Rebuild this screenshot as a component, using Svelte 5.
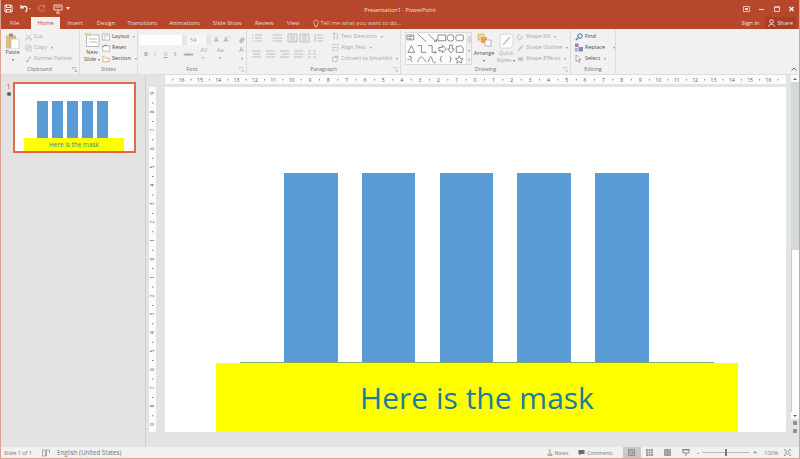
<script>
  const tabs = ['File','Home','Insert','Design','Transitions','Animations','Slide Show','Review','View'];
  const bars = [0,1,2,3,4];
  const hticks = Array.from({length: 67}, (_, i) => i - 33);
  const vticks = Array.from({length: 37}, (_, i) => i - 18);
</script>

<div class="app">
  <header class="title">
    <div class="qat">
      <svg width="9" height="9" viewBox="0 0 9 9"><path d="M1 1h6l1 1v6H1z M2.500 1v2.500h4V1 M2.500 8V5.500h4V8" fill="none" stroke="#fff" stroke-width=".9"/></svg>
      <svg class="undo" width="12" height="9" viewBox="0 0 12 9"><path d="M2 1v3h3 M2 4c2-2.500 6-2 6 1 0 1-.6 2-1.500 3" fill="none" stroke="#fff" stroke-width="1.200"/><path d="M10 4h2l-1 1.200z" fill="#f3d7cf"/></svg>
      <svg class="dim" width="9" height="9" viewBox="0 0 9 9"><path d="M7 2.500A3 3 0 1 0 7.500 5 M7.500 .8v2h-2" fill="none" stroke="#d98d78" stroke-width=".9"/></svg>
      <svg class="slideq" width="10" height="10" viewBox="0 0 10 10"><path d="M1 1h8v5H1z M5 6v3 M3 9h4" fill="none" stroke="#f3d7cf"/><path d="M2.500 3h5" stroke="#f3d7cf"/></svg>
      <svg width="4" height="3" viewBox="0 0 4 3"><path d="M0 0h4L2 3z" fill="#f3d7cf"/></svg>
    </div>
    <div class="doc">Presentation1 - PowerPoint</div>
    <div class="win">
      <svg width="7" height="6" viewBox="0 0 7 6"><path d="M.5.500h6v5h-6z" fill="none" stroke="#f3d7cf" stroke-width=".8"/><path d="M2 2h3v2H2z" fill="#f3d7cf"/></svg>
      <svg width="5" height="6" viewBox="0 0 5 6"><path d="M0 3.500h5" stroke="#f3d7cf" stroke-width="1.100"/></svg>
      <svg width="6" height="6" viewBox="0 0 6 6"><path d="M.5 1h5v4.500h-5z" fill="none" stroke="#f3d7cf" stroke-width=".9"/><path d="M.5 1h5" stroke="#f3d7cf" stroke-width="1.300"/></svg>
      <svg width="5" height="6" viewBox="0 0 5 6"><path d="M.5 1l4 4M4.500 1l-4 4" stroke="#fff" stroke-width="1.200"/></svg>
    </div>
  </header>

  <nav class="tabs">
    {#each tabs as t, i}
      <span class="tab" class:active={i === 1}>{t}</span>
    {/each}
    <span class="tell">
      <svg width="6" height="9" viewBox="0 0 6 9"><path d="M1.500 5.500C.2 4 .5 1 3 1s2.800 3 1.500 4.500V7h-3zM2 8h2" fill="none" stroke="#f0cfc5" stroke-width=".7"/></svg>
      Tell me what you want to do...
    </span>
    <span class="account">
      <span>Sign in</span>
      <span class="share">
        <svg width="7" height="8" viewBox="0 0 7 8"><circle cx="3.500" cy="2.500" r="1.800" fill="none" stroke="#fff" stroke-width=".8"/><path d="M.5 7.500c.3-3 5.700-3 6 0" fill="none" stroke="#fff" stroke-width=".8"/></svg>
        Share
      </span>
    </span>
  </nav>

  <section class="ribbon">
    <div class="group clipboard">
      <div class="body">
        <div class="big paste">
          <svg width="15" height="16" viewBox="0 0 15 16"><path d="M1 2.500h10v13H1z" fill="#dcbc80"/><path d="M4 .5h4v3H4z" fill="#8d8d8d"/><path d="M6 6h8v10H6z" fill="#fff" stroke="#b5b5b5" stroke-width=".6"/></svg>
          <span>Paste</span>
          <i class="caret"></i>
        </div>
        <div class="rows muted">
          <span class="row"><svg width="7" height="8" viewBox="0 0 8 8"><path d="M1 1l5 5M7 1L2 6" stroke="#b9b9b9"/><circle cx="1.500" cy="6.500" r="1.200" fill="none" stroke="#b9b9b9" stroke-width=".6"/><circle cx="6.500" cy="6.500" r="1.200" fill="none" stroke="#b9b9b9" stroke-width=".6"/></svg>Cut</span>
          <span class="row"><svg width="7" height="8" viewBox="0 0 8 8"><path d="M.5.500h5v5h-5zM2.500 2.500h5v5h-5z" fill="#f1f1f1" stroke="#bbb" stroke-width=".7"/></svg>Copy<i class="caret small"></i></span>
          <span class="row"><svg width="7" height="8" viewBox="0 0 8 8"><path d="M1 7l3-3 1 1-3 3zM4 3l2-2 1 1-2 2z" fill="#b5b5b5"/></svg>Format Painter</span>
        </div>
      </div>
      <div class="label">Clipboard<svg class="launcher" width="5" height="5" viewBox="0 0 5 5"><path d="M.5 2V.5H4.500M2 2l2.500 2.500M4.500 2.500v2H2.500" fill="none" stroke="#999" stroke-width=".6"/></svg></div>
    </div>

    <div class="group slides">
      <div class="body">
        <div class="big newslide">
          <svg width="15" height="15" viewBox="0 0 15 15"><path d="M1.500 2h12.500v11.500H1.500z" fill="#fff" stroke="#a9a9a9" stroke-width=".8"/><path d="M0 0h6v3H0z" fill="#eccd92"/><path d="M4 6h8M4 9h8" stroke="#bdbdbd"/></svg>
          <span>New</span>
          <span>Slide<i class="caret inl"></i></span>
        </div>
        <div class="rows on">
          <span class="row"><svg width="8" height="8" viewBox="0 0 9 8"><path d="M.5.500h8v7h-8z" fill="#fff" stroke="#999" stroke-width=".7"/><path d="M2 2h5v1.500H2zM2 4.500h2v2H2z" fill="#c9c9c9"/></svg>Layout<i class="caret small"></i></span>
          <span class="row"><svg width="8" height="8" viewBox="0 0 9 8"><path d="M.5 1.500h8v6h-8z" fill="#fff" stroke="#999" stroke-width=".7"/><path d="M1 3C2 .5 5 .5 6 2" fill="none" stroke="#4b86bd"/></svg>Reset</span>
          <span class="row"><svg width="8" height="8" viewBox="0 0 9 8"><path d="M1 1h2M1 1v6h7V3H3" fill="#fff" stroke="#d19a55" stroke-width=".8"/></svg>Section<i class="caret small"></i></span>
        </div>
      </div>
      <div class="label">Slides</div>
    </div>

    <div class="group font">
      <div class="body col">
        <div class="fontrow">
          <span class="fname"><i class="spin"></i></span>
          <span class="fsize">54<i class="spin"></i></span>
          <span class="grow">A<sup>^</sup></span>
          <span class="grow">A<sup>v</sup></span>
          <svg class="eraser" width="8" height="8" viewBox="0 0 8 8"><path d="M1 5l3-4 3 2-3 4H2z" fill="#cdb9b5"/></svg>
        </div>
        <div class="fmt muted">
          <b>B</b><em>I</em><u>U</u><span>S</span><s>abc</s><span class="av">AV<i class="caret small"></i></span><span class="aa">Aa<i class="caret small"></i></span><span class="fcolor">A<i class="caret small"></i></span>
        </div>
      </div>
      <div class="label">Font<svg class="launcher" width="5" height="5" viewBox="0 0 5 5"><path d="M.5 2V.5H4.500M2 2l2.500 2.500M4.500 2.500v2H2.500" fill="none" stroke="#bbb" stroke-width=".6"/></svg></div>
    </div>

    <div class="group para">
      <div class="body">
        <svg class="paraicons" width="80" height="27" viewBox="0 0 80 27">
          <g fill="none" stroke="#b4b4b4" stroke-width=".8">
            <path d="M3 2h7M3 5h7M3 8h7M0 2h1.500M0 5h1.500M0 8h1.500"/>
            <path d="M22 2h8M22 5h8M22 8h8M20 2h1M20 5h1M20 8h1"/>
            <path d="M36 1h9v8h-9zM38 3h5M38 5h5M38 7h5"/>
            <path d="M48 1h9v8h-9zM50 3h5M50 5h5M50 7h5"/>
            <path d="M65 2h6M65 5h6M65 8h6M63 1v8"/>
            <path d="M0 18h9M1 21h7M0 24h9"/>
            <path d="M14 18h9M14 21h9M14 24h9"/>
            <path d="M28 18h9M30 21h7M28 24h9"/>
            <path d="M42 18h9M42 21h9M42 24h9"/>
            <path d="M56 18h3M56 21h3M56 24h3M61 18h3M61 21h3M61 24h3"/>
          </g>
        </svg>
        <div class="rows muted para-text">
          <span class="row"><svg width="7" height="9" viewBox="0 0 8 9"><path d="M1 1h3M2.500 1v7M6 1v7" fill="none" stroke="#b7b7b7"/></svg>Text Direction<i class="caret small"></i></span>
          <span class="row"><svg width="7" height="9" viewBox="0 0 8 9"><path d="M.5 1h7v7h-7z" fill="none" stroke="#b7b7b7" stroke-dasharray="1 .6"/><path d="M2 4.500h4" stroke="#b7b7b7"/></svg>Align Text<i class="caret small"></i></span>
          <span class="row"><svg width="7" height="9" viewBox="0 0 9 9"><path d="M.5 3h6v5.500h-6z" fill="none" stroke="#b7b7b7"/><path d="M3 1h6v2H3z" fill="#b8cfb0"/></svg>Convert to SmartArt<i class="caret small"></i></span>
        </div>
      </div>
      <div class="label">Paragraph<svg class="launcher" width="5" height="5" viewBox="0 0 5 5"><path d="M.5 2V.5H4.500M2 2l2.500 2.500M4.500 2.500v2H2.500" fill="none" stroke="#bbb" stroke-width=".6"/></svg></div>
    </div>

    <div class="group drawing">
      <div class="body">
        <div class="gallery">
          <svg width="60" height="31" viewBox="0 0 62 32">
            <g fill="none" stroke="#5c5c5c" stroke-width=".7">
              <path d="M1 2h7v5H1zM2.500 3.500h4M2.500 5.500h3"/>
              <path d="M12 1l9 8"/>
              <path d="M23 1l8 8M29 8.500h2.500V6"/>
              <path d="M33 2h8v6h-8z"/>
              <circle cx="46" cy="5" r="3.500"/>
              <rect x="51.500" y="2" width="8" height="6" rx="2"/>
              <path d="M2 20l3.500-7 3.500 7z"/>
              <path d="M12 13h4v7h5"/>
              <path d="M23 13h4v7h4M29.500 18.500l1.500 1.500-1.500 1.500"/>
              <path d="M34 15h3.500v-2.500l4 4-4 4V18.500H34z"/>
              <path d="M45 12.500h3v4h2l-3.500 4-3.500-4h2z"/>
              <path d="M52 14h3l1-1.500 3 3V20h-7z"/>
              <path d="M3 24l3 1-1.500 2 2 3M1.500 27l2 .5"/>
              <path d="M12 30c3-8 4-6 9 0M12 24"/>
              <path d="M23 30c2-7 3-7 4-3s2 4 4 3"/>
              <path d="M37 24c-2 0 0 3-2 3 2 0 0 3 2 3"/>
              <path d="M45 24c2 0 0 3 2 3-2 0 0 3-2 3"/>
              <path d="M55 23.500l1.200 2.700 2.800.3-2.100 1.900.6 2.800-2.500-1.500-2.500 1.500.6-2.800-2.100-1.900 2.800-.3z"/>
            </g>
          </svg>
          <div class="gscroll"><i class="g1"></i><i class="caret small"></i><i class="caret small"></i></div>
        </div>
        <div class="big arrange">
          <svg width="15" height="14" viewBox="0 0 15 14"><path d="M1 1h6v6H1z" fill="#f3d69a" stroke="#d8a64d" stroke-width=".7"/><path d="M4 4h6v6H4z" fill="#eba93c"/><path d="M8 7h6v6H8z" fill="#fff" stroke="#9a9a9a" stroke-width=".7"/></svg>
          <span>Arrange</span>
          <i class="caret"></i>
        </div>
        <div class="big quick muted">
          <svg width="15" height="16" viewBox="0 0 15 16"><path d="M1 2c4-1.500 9-1.500 13 0v9c0 2-2 4-4 4H1z" fill="#fcfcfc" stroke="#d0d0d0" stroke-width=".8"/><path d="M4 12l7-8" stroke="#c2c2c2" stroke-width="1.500"/></svg>
          <span>Quick</span>
          <span>Styles<i class="caret inl"></i></span>
        </div>
        <div class="rows muted shapes">
          <span class="row"><svg width="7" height="8" viewBox="0 0 8 8"><path d="M2 1l4 4-3 2.500L0 4z" fill="none" stroke="#b7b7b7"/></svg>Shape Fill<i class="caret small"></i></span>
          <span class="row"><svg width="7" height="8" viewBox="0 0 8 8"><path d="M1 7l5-6 1 1-5 5z" fill="none" stroke="#b7b7b7"/></svg>Shape Outline<i class="caret small"></i></span>
          <span class="row"><svg width="7" height="8" viewBox="0 0 8 8"><path d="M1 2h6v4H1z" fill="#c5c5c5"/></svg>Shape Effects<i class="caret small"></i></span>
        </div>
      </div>
      <div class="label">Drawing<svg class="launcher" width="5" height="5" viewBox="0 0 5 5"><path d="M.5 2V.5H4.500M2 2l2.500 2.500M4.500 2.500v2H2.500" fill="none" stroke="#bbb" stroke-width=".6"/></svg></div>
    </div>

    <div class="group editing">
      <div class="body">
        <div class="rows on">
          <span class="row"><svg width="8" height="8" viewBox="0 0 8 8"><circle cx="5" cy="3" r="2.200" fill="none" stroke="#2f6fae"/><path d="M3.300 4.700L.8 7.200" stroke="#2f6fae" stroke-width="1.200"/></svg>Find</span>
          <span class="row"><svg width="8" height="9" viewBox="0 0 9 9"><path d="M0 0h4v4H0z" fill="#9a7fb0"/><path d="M4 4h5v5H4z" fill="#6f8fb5"/><path d="M0 5h3v4H0z" fill="#b9a6c8"/></svg>Replace<i class="caret small far"></i></span>
          <span class="row"><svg width="8" height="9" viewBox="0 0 8 9"><path d="M1 1v6.500l1.700-1.500 1.300 2.500 1-.5L3.800 5.600H6z" fill="#fff" stroke="#777" stroke-width=".6"/></svg>Select<i class="caret small"></i></span>
        </div>
      </div>
      <div class="label">Editing</div>
    </div>

    <svg class="collapse" width="6" height="4" viewBox="0 0 6 4"><path d="M.5 3.500L3 1l2.500 2.500" fill="none" stroke="#666" stroke-width="1"/></svg>
  </section>

  <main class="main">
    <aside class="thumbs">
      <div class="num">
        <span>1</span>
        <i class="star"></i>
      </div>
      <div class="thumb">
        <div class="tbars">
          {#each bars as b}<i></i>{/each}
        </div>
        <div class="tmask">Here is the mask</div>
      </div>
    </aside>

    <div class="editor">
      <div class="stage">
        <svg class="hruler" width="621" height="9" viewBox="0 0 621 9">
          {#each hticks as t}
            {#if t % 2 === 0}
              <text x={310 + t * 9.17} y="6.500" text-anchor="middle">{Math.abs(t / 2)}</text>
            {:else}
              <rect x={310 + t * 9.17} y="4" width=".8" height="1.500" fill="#666" />
            {/if}
          {/each}
        </svg>
        <div class="workrow">
          <svg class="vruler" width="7" height="345" viewBox="0 0 7 345">
            {#each vticks as t}
              {#if t % 2 === 0}
                <text transform="translate(5.200 {172 + t * 9.2}) rotate(-90)" text-anchor="middle">{Math.abs(t / 2)}</text>
              {:else}
                <rect x="3" y={172 + t * 9.2} width="1.500" height=".8" fill="#666" />
              {/if}
            {/each}
          </svg>
          <div class="slide">
            <div class="bars">
              {#each bars as b}<div class="bar"></div>{/each}
            </div>
            <div class="mask">Here is the mask</div>
          </div>
        </div>
      </div>
      <div class="scroll">
        <span class="arrow up"></span>
        <span class="track"></span>
        <span class="sthumb"></span>
        <span class="arrow down"></span>
        <span class="pg"></span>
        <span class="pg"></span>
      </div>
    </div>
  </main>

  <footer class="status">
    <span class="s1">Slide 1 of 1</span>
    <svg class="spell" width="8" height="8" viewBox="0 0 8 8"><path d="M.5 1h3v6h-3zM4.500 1h3v3M4.500 1v6" fill="none" stroke="#888" stroke-width=".7"/></svg>
    <span class="s2">English (United States)</span>
    <span class="right">
      <span class="si"><svg width="6" height="7" viewBox="0 0 6 7"><path d="M1 5h4v1.500H1zM3 .5v4.500M1.500 2L3 .5" fill="none" stroke="#888" stroke-width=".7"/></svg>Notes</span>
      <span class="si cm"><svg width="7" height="7" viewBox="0 0 7 7"><path d="M.5 1h6v4H3L1.500 6.500V5h-1z" fill="#6a6a6a"/></svg>Comments</span>
      <span class="views">
        <span class="v on"><svg width="7" height="7" viewBox="0 0 7 7"><path d="M.5.500h6v6h-6zM2 2h3v3H2z" fill="none" stroke="#777" stroke-width=".7"/></svg></span>
        <span class="v"><svg width="7" height="7" viewBox="0 0 7 7"><path d="M0 0h2v2H0zM2.500 0h2v2h-2zM5 0h2v2H5zM0 2.500h2v2H0zM2.500 2.500h2v2h-2zM5 2.500h2v2H5zM0 5h2v2H0zM2.500 5h2v2h-2zM5 5h2v2H5z" fill="#999"/></svg></span>
        <span class="v"><svg width="7" height="7" viewBox="0 0 7 7"><path d="M.5.500h6v6h-6zM3.500.5v6" fill="#aaa" stroke="#888" stroke-width=".7"/></svg></span>
        <span class="v"><svg width="8" height="7" viewBox="0 0 8 7"><path d="M0 .5h8M1 1h6v3H1zM4 4v3" fill="none" stroke="#777" stroke-width=".8"/></svg></span>
      </span>
      <span class="zoom">
        <b>-</b>
        <span class="slider"><i></i></span>
        <b>+</b>
      </span>
      <span class="pct">100%</span>
      <svg class="fit" width="7" height="7" viewBox="0 0 7 7"><path d="M.5 2V.5H2M5 .5h1.500V2M6.500 5v1.500H5M2 6.500H.5V5M2 2h3v3H2z" fill="none" stroke="#888" stroke-width=".7"/></svg>
    </span>
  </footer>
</div>

<style>
  :global(body) { margin: 0; background: #e3e3e3; }
  .app {
    width: 800px; height: 459px; display: flex; flex-direction: column; overflow: hidden;
    font-family: "Open Sans", "Liberation Sans", sans-serif; font-size: 5.500px; color: #555;
    box-sizing: border-box; border: solid #d9a391; border-width: 0 1px 1px 1px;
    position: relative;
  }
  svg { display: block; flex: none; }

  .title { height: 17px; flex: none; margin: 0 -1px; background: #b7472a; display: flex; align-items: center; color: #f4dfd9; position: relative; }
  .qat { display: flex; align-items: center; margin-left: 4px; gap: 5px; }
  .qat .undo { margin-left: 1px; }
  .qat .dim { margin-left: 1px; }
  .qat .slideq { margin-left: 2px; }
  .qat svg:last-child { margin-left: -2px; }
  .doc { position: absolute; left: 0; right: 0; text-align: center; top: 6px; font-size: 5.600px; color: #f6e0da; }
  .win { margin-left: auto; display: flex; gap: 9.500px; align-items: center; margin-right: 6px; }

  .tabs { height: 12px; flex: none; margin: 0 -1px; background: #b7472a; display: flex; align-items: stretch; color: #f4dcd5; font-size: 5.800px; line-height: 13px; position: relative; }
  .tab { margin-left: 13px; white-space: nowrap; }
  .tab:first-child { margin-left: 10px; }
  .tab.active { background: #f1f1f1; color: #b7472a; margin-left: 12px; width: 29px; text-align: center; }
  .tab:nth-child(3) { margin-left: 7px; }
  .tab:nth-child(4) { margin-left: 14px; }
  .tab:nth-child(5) { margin-left: 12px; }
  .tab:nth-child(6) { margin-left: 12px; }
  .tell { margin-left: 13px; display: flex; align-items: center; gap: 2px; color: #efc9bd; }
  .account { margin-left: auto; display: flex; align-items: stretch; gap: 6px; margin-right: 4px; color: #f7e4de; }
  .share { display: flex; align-items: center; gap: 2px; background: #a83f24; padding: 0 3px; }

  .ribbon { height: 46px; flex: none; margin: 0 -1px; background: #f1f1f1; display: flex; position: relative; padding-top: 1px; box-sizing: border-box; border-bottom: 1px solid #dedede; }
  .group { flex: none; display: flex; flex-direction: column; border-right: 1px solid #dcdcdc; box-sizing: border-box; height: 44px; position: relative; }
  .body { height: 35px; flex: none; display: flex; }
  .body.col { flex-direction: column; }
  .label { height: 9px; line-height: 9px; text-align: center; color: #777; font-size: 5.500px; }
  .launcher { position: absolute; right: 2px; bottom: 2px; }
  .clipboard { width: 80px; }
  .slides { width: 58px; }
  .font { width: 109px; }
  .para { width: 154px; }
  .drawing { width: 170px; }
  .editing { width: 45px; }

  .big { display: flex; flex-direction: column; align-items: center; line-height: 7px; flex: none; }
  .caret { display: inline-block; width: 0; height: 0; border: 1.500px solid transparent; border-top: 2px solid #666; border-bottom: 0; }
  .caret.small { margin-left: 2px; vertical-align: middle; border-top-color: #999; }
  .caret.inl { margin-left: 2px; vertical-align: middle; }
  .caret.far { margin-left: 6px; }
  .paste { width: 25px; margin-top: 3px; color: #555; }
  .paste .caret { margin-top: 3px; }
  .rows { display: flex; flex-direction: column; line-height: 11px; white-space: nowrap; margin-top: 1px; }
  .row { display: flex; align-items: center; height: 11px; gap: 2px; }
  .muted { color: #a6a6a6; }
  .on { color: #4b4b4b; }
  .newslide { width: 20px; margin: 3px 0 0 2px; color: #555; }
  .newslide span:nth-of-type(1) { margin-top: 1px; }
  .slides .rows { margin-left: 0; }

  .fontrow { display: flex; align-items: center; height: 11px; margin: 4px 0 0 2px; color: #9c9c9c; }
  .fname { width: 47px; height: 10px; background: #fff; position: relative; flex: none; }
  .fsize { width: 24px; height: 10px; background: #f6f6f6; line-height: 10px; padding-left: 3px; box-sizing: border-box; position: relative; color: #999; flex: none; }
  .spin { position: absolute; right: 0; top: 0; bottom: 0; width: 5px; background: #e6e6e6; }
  .grow { margin-left: 3px; font-size: 7px; width: 7px; }
  .grow sup { font-size: 3px; vertical-align: top; line-height: 4px; }
  .eraser { margin-left: 8px; }
  .fmt { display: flex; align-items: center; gap: 7px; margin: 4px 0 0 6px; height: 9px; font-size: 5.800px; }
  .fmt b, .fmt em, .fmt u { width: 3px; }
  .fmt .fcolor { font-size: 7px; margin-left: 6px; }

  .para .paraicons { margin: 3px 0 0 5px; }

  .gallery { width: 67px; height: 33px; margin: 2px 0 0 4px; background: #fbfbfb; border: 1px solid #dadada; box-sizing: border-box; display: flex; flex: none; }
  .gscroll { width: 5px; display: flex; flex-direction: column; align-items: center; justify-content: space-around; background: #f0f0f0; border-left: 1px solid #e3e3e3; margin-left: auto; }
  .gscroll .caret.small { margin: 0; }
  .g1 { width: 3px; height: 7px; background: #d5d5d5; }
  .arrange { width: 22px; margin: 3px 0 0 1px; color: #555; }
  .arrange span { margin-top: 3px; }
  .arrange .caret { margin-top: 3px; }
  .quick { width: 22px; margin: 3px 0 0 0; }
  .quick span:nth-of-type(1) { margin-top: 1px; }
  .editing .rows { margin-left: 4px; }
  .collapse { position: absolute; right: 3px; bottom: 3px; }

  .main { flex: 1; display: flex; min-height: 0; background: #e3e3e3; }
  .thumbs { width: 145px; flex: none; border-right: 1px solid #cfcfcf; box-sizing: border-box; display: flex; padding: 7px 0 0 4px; }
  .num { width: 7px; display: flex; flex-direction: column; align-items: center; color: #d24726; font-size: 7px; line-height: 9px; }
  .star { width: 4px; height: 4px; border-radius: 50%; background: #5f5f5f; margin-top: 1px; }
  .thumb { width: 123px; height: 71px; border: 2px solid #e4694a; background: #fff; box-sizing: border-box; display: flex; flex-direction: column; margin-left: 1px; }
  .tbars { display: flex; gap: 4px; margin: 17px 0 0 22px; }
  .tbars i { width: 11px; height: 37px; background: #5b9bd5; }
  .tmask { width: 100px; height: 13px; background: #ff0; margin-left: 9px; text-align: center; font-size: 6.400px; line-height: 14px; color: #2e8c7d; }

  .editor { flex: 1; display: flex; min-width: 0; }
  .stage { width: 640px; flex: none; padding-left: 3px; box-sizing: border-box; }
  .hruler { margin-left: 16px; background: #fbfbfb; }
  .hruler text, .vruler text { font-size: 5px; fill: #555; font-family: "Open Sans", sans-serif; }
  .workrow { display: flex; margin-top: 3px; }
  .vruler { background: #fbfbfb; }
  .slide { width: 621px; height: 345px; margin-left: 9px; background: #fff; position: relative; overflow: hidden; }
  .bars { display: flex; gap: 24.300px; margin-left: 119px; padding-top: 86px; }
  .bar { width: 53.500px; height: 190px; background: #5b9bd5; }
  .mask::before { content: ""; position: absolute; left: 24px; right: 24px; top: -1px; height: 1px; background: #83ab6a; }
  .mask { position: absolute; left: 51px; width: 522px; top: 276px; height: 69px; background: #ff0; color: #1b7c9b; font-family: "Open Sans", sans-serif; font-size: 30px; line-height: 69px; text-align: center; }

  .scroll { margin-left: 5px; width: 8px; display: flex; flex-direction: column; height: 372px; }
  .arrow { height: 7px; background: #fbfbfb; flex: none; position: relative; }
  .arrow::after { content: ""; position: absolute; left: 2px; top: 2.500px; border: 2px solid transparent; }
  .up::after { border-bottom-color: #666; border-top: 0; }
  .down::after { border-top-color: #666; border-bottom: 0; }
  .track { height: 168px; background: #d6d9db; flex: none; }
  .sthumb { height: 162px; background: #fff; flex: none; border-left: 1px solid #ccc; box-sizing: border-box; }
  .pg { height: 8px; flex: none; position: relative; }
  .pg::after { content: ""; position: absolute; left: 2px; top: 2px; width: 4px; height: 4px; background: #8f8f8f; border-radius: 1px; }

  .status { height: 11px; flex: none; background: #f1f1f1; display: flex; align-items: center; color: #777; font-size: 5.500px; position: relative; }
  .s1 { margin-left: 3px; }
  .spell { margin-left: 10px; }
  .s2 { margin-left: 7px; font-size: 6.200px; }
  .right { margin-left: auto; display: flex; align-items: center; height: 100%; margin-right: 8px; }
  .si { display: flex; align-items: center; gap: 2px; font-size: 5px; }
  .cm { margin-left: 10px; }
  .views { display: flex; margin-left: 10px; height: 100%; }
  .v { width: 18px; display: flex; align-items: center; justify-content: center; }
  .v.on { background: #c9c9c9; }
  .zoom { display: flex; align-items: center; margin-left: 2px; gap: 3px; }
  .zoom b { font-weight: 400; font-size: 7px; color: #666; }
  .slider { width: 48px; height: 1px; background: #bbb; position: relative; }
  .slider i { position: absolute; left: 23px; top: -3px; width: 2px; height: 7px; background: #777; }
  .pct { margin-left: 7px; }
  .fit { margin-left: 6px; }
</style>
